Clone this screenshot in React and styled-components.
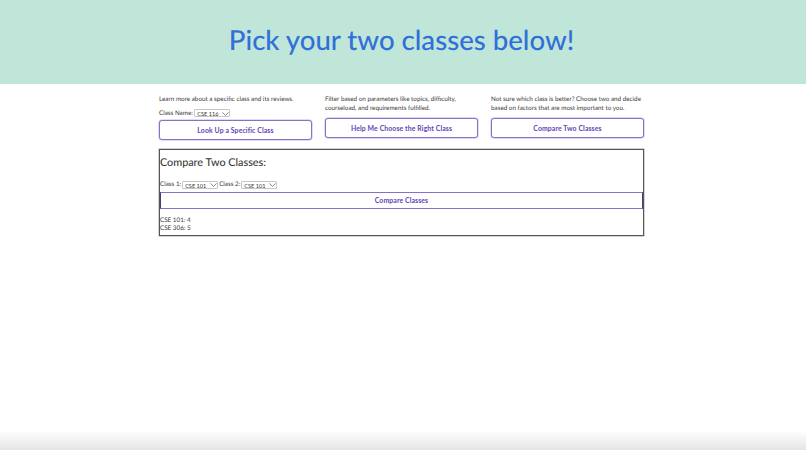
import React from "react";
import styled, { createGlobalStyle } from "styled-components";

const GlobalStyle = createGlobalStyle`
  html, body {
    margin: 0;
    padding: 0;
  }
  body {
    font-family: "Lato", "Liberation Sans", sans-serif;
    color: #333;
    text-rendering: geometricPrecision;
  }
`;

const options = [
  {
    text: "Learn more about a specific class and its reviews.",
    button: "Look Up a Specific Class",
    picker: true,
  },
  {
    text: "Filter based on parameters like topics, difficulty, courseload, and requirements fulfilled.",
    button: "Help Me Choose the Right Class",
  },
  {
    text: "Not sure which class is better? Choose two and decide based on factors that are most important to you.",
    button: "Compare Two Classes",
  },
];

const courses = ["CSE 101", "CSE 116", "CSE 306"];

const Picker = ({ value }) => (
  <SelectWrap>
    <Select defaultValue={value}>
      {courses.map(c => (
        <option key={c}>{c}</option>
      ))}
    </Select>
    <svg width="7" height="4" viewBox="0 0 7 4" fill="none">
      <path d="M0.4 0.4 L3.5 3.4 L6.6 0.4" stroke="#555" strokeWidth="0.7" />
    </svg>
  </SelectWrap>
);

const App = () => {
  return (
    <Page>
      <GlobalStyle />
      <Header>
        <Title>Pick your two classes below!</Title>
      </Header>
      <Content>
        <Options>
          {options.map(o => (
            <Option key={o.button}>
              <Blurb>{o.text}</Blurb>
              {o.picker && (
                <PickerRow>
                  Class Name: <Picker value="CSE 116" />
                </PickerRow>
              )}
              <OutlineButton>{o.button}</OutlineButton>
            </Option>
          ))}
        </Options>
        <ComparePanel>
          <PanelTitle>Compare Two Classes:</PanelTitle>
          <SelectRow>
            Class 1: <Picker value="CSE 101" /> Class 2: <Picker value="CSE 101" />
          </SelectRow>
          <WideButton>Compare Classes</WideButton>
          <Results>
            <div>CSE 101: 4</div>
            <div>CSE 306: 5</div>
          </Results>
        </ComparePanel>
      </Content>
    </Page>
  );
};

export default App;

const Page = styled.div`
  height: 100vh;
  min-height: 450px;
  overflow: hidden;
  background: linear-gradient(
    to bottom,
    #fff 0,
    #fff calc(100% - 20px),
    #e5e5e5 100%
  );
`;

const Header = styled.header`
  height: 84px;
  background: #bfe6d8;
  display: flex;
  justify-content: center;
  padding: 22px 3px 0 0;
  box-sizing: border-box;
`;

const Title = styled.h1`
  margin: 0;
  font-size: 27.6px;
  line-height: 36px;
  font-weight: 500;
  color: #3170d8;
`;

const Content = styled.main`
  width: 485px;
  margin-left: 159px;
  padding-top: 11px;
`;

const Options = styled.div`
  display: grid;
  grid-template-columns: repeat(3, 153px);
  column-gap: 13px;
  align-items: start;
`;

const Option = styled.div`
  display: flex;
  flex-direction: column;
`;

const Blurb = styled.p`
  margin: 0 0 5px;
  font-size: 6.3px;
  line-height: 9px;
  color: #3a3a3a;
`;

const PickerRow = styled.div`
  display: flex;
  align-items: center;
  gap: 1.5px;
  height: 10px;
  margin-top: -1px;
  margin-bottom: 2px;
  font-size: 6.3px;
  color: #3a3a3a;
`;

const SelectWrap = styled.span`
  position: relative;
  display: inline-flex;
  align-items: center;

  svg {
    position: absolute;
    right: 1.5px;
    top: 2.5px;
    pointer-events: none;
  }
`;

const Select = styled.select`
  appearance: none;
  width: 36px;
  height: 8px;
  padding: 0 0 0 2px;
  margin: 0;
  border: 0.5px solid #c8c8c8;
  border-radius: 1px;
  background: #fff;
  font-family: inherit;
  font-size: 5.6px;
  line-height: 7px;
  color: #333;
  outline: none;
`;

const OutlineButton = styled.button`
  height: 19.5px;
  padding: 0;
  background: #fff;
  border: 1px solid #8a70c8;
  box-shadow: 0 0 0 0.5px rgba(138, 112, 200, 0.5);
  border-radius: 3px;
  font-family: inherit;
  font-size: 6.9px;
  font-weight: 700;
  color: #6244b4;
  letter-spacing: 0.1px;
`;

const ComparePanel = styled.section`
  margin-top: 9px;
  height: 87px;
  box-sizing: border-box;
  border: 1px solid #555;
  box-shadow: 0 0 0 0.5px rgba(85, 85, 85, 0.5);
`;

const PanelTitle = styled.h2`
  margin: 0;
  padding-top: 6px;
  font-size: 10.8px;
  line-height: 14px;
  font-weight: 500;
  color: #3a3a3a;
`;

const SelectRow = styled.div`
  display: flex;
  align-items: center;
  gap: 1px;
  height: 11px;
  margin-top: 9.5px;
  margin-bottom: 2px;
  font-size: 6.3px;
  color: #3a3a3a;
`;

const WideButton = styled(OutlineButton)`
  display: block;
  width: 100%;
  height: 16.5px;
  border-radius: 0;
  box-shadow: none;
  border-right-color: #4a3a80;
  border-left-color: #4a3a80;
`;

const Results = styled.div`
  margin-top: 8.4px;
  font-size: 6.3px;
  line-height: 8.6px;
  color: #3a3a3a;
`;
